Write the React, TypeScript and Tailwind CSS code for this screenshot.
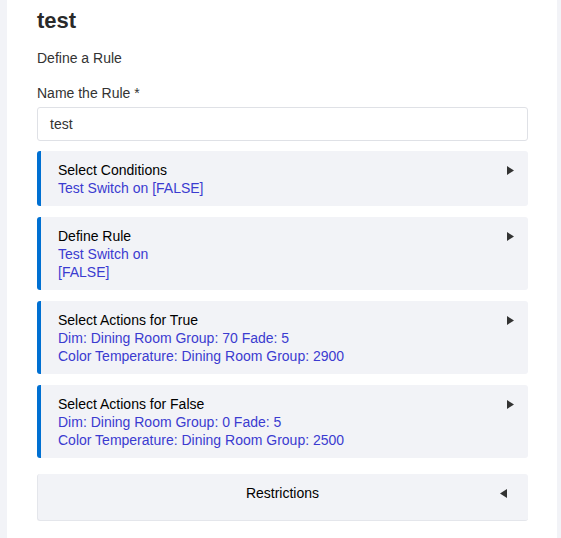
import React from "react";

function Caret({ dir }: { dir: "right" | "left" }) {
  return (
    <svg width="7" height="9" viewBox="0 0 7 9" className="shrink-0">
      {dir === "right" ? (
        <polygon points="0,0 7,4.5 0,9" fill="#333" />
      ) : (
        <polygon points="7,0 0,4.5 7,9" fill="#333" />
      )}
    </svg>
  );
}

function RuleCard({ title, lines }: { title: string; lines: string[] }) {
  return (
    <div className="flex rounded-[3px] bg-[#f2f3f7] border-l-4 border-[#0070d2] pl-[17px] pr-[14px] pt-[10px] pb-[9px]">
      <div className="flex-1 leading-[18px]">
        <div className="text-black">{title}</div>
        {lines.map((l, i) => (
          <div key={i} className="text-[#3b3bd0]">
            {l}
          </div>
        ))}
      </div>
      <div className="h-[18px] flex items-center">
        <Caret dir="right" />
      </div>
    </div>
  );
}

export default function App() {
  return (
    <div
      className="min-h-[538px] bg-[#f2f3f7] pl-[7px] pr-[4px] text-[14px] text-[#333]"
      style={{ fontFamily: '"Liberation Sans", Arial, sans-serif' }}
    >
      <div className="bg-white min-h-[538px] pl-[30px] pr-[29px]">
        <h1 className="pt-[8px] text-[22px] font-bold leading-[26px] text-[#2a2a2a]">test</h1>
        <p className="mt-[15px] leading-[18px]">Define a Rule</p>
        <label className="block mt-[17px] leading-[18px]">Name the Rule *</label>
        <div className="mt-[5px] h-[34px] border border-[#dfe1e6] rounded-[3px] flex items-center pl-[12px]">
          test
        </div>
        <div className="mt-[10px] flex flex-col gap-[11px]">
          <RuleCard title="Select Conditions" lines={["Test Switch on [FALSE]"]} />
          <RuleCard title="Define Rule" lines={["Test Switch on", "[FALSE]"]} />
          <RuleCard
            title="Select Actions for True"
            lines={["Dim: Dining Room Group: 70 Fade: 5", "Color Temperature: Dining Room Group: 2900"]}
          />
          <RuleCard
            title="Select Actions for False"
            lines={["Dim: Dining Room Group: 0 Fade: 5", "Color Temperature: Dining Room Group: 2500"]}
          />
        </div>
        <div className="mt-[16px] h-[47px] rounded-[3px] bg-[#f2f3f7] border-l border-b border-[#e4e6eb] flex items-start pt-[10px] pl-[27px] pr-[21px]">
          <div className="flex-1 text-center text-black leading-[18px]">Restrictions</div>
          <div className="h-[18px] flex items-center">
            <Caret dir="left" />
          </div>
        </div>
      </div>
    </div>
  );
}
